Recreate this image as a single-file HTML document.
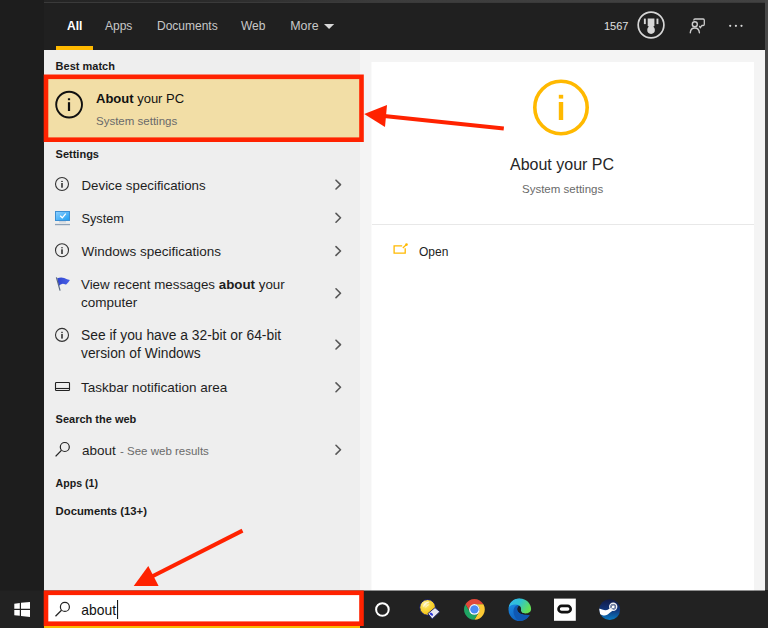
<!DOCTYPE html>
<html><head><meta charset="utf-8">
<style>
*{margin:0;padding:0;box-sizing:border-box}
html,body{width:768px;height:628px;overflow:hidden;background:#1d1d1d}
body{position:relative;font-family:"Liberation Sans",sans-serif}
.a{position:absolute;white-space:nowrap;line-height:1}
.b{position:absolute}
svg{position:absolute;overflow:visible}
#hdr{left:44px;top:0;width:721px;height:50px;background:#202020}
#ttop{left:44px;top:0;width:724px;height:2px;background:linear-gradient(90deg,#242424 0,#2a2a2a 160px,#3c3c3c 340px,#424242 100%)}
#hline{left:44px;top:2px;width:721px;height:1px;background:#3a3a3a}
#left{left:44px;top:50px;width:316px;height:541px;background:#eeeeee}
#right{left:360px;top:50px;width:405px;height:541px;background:#f4f4f4}
#rstrip{left:765px;top:0;width:3px;height:590px;background:#484848}
#card{left:372px;top:62px;width:382px;height:529px;background:#ffffff}
#task{left:0;top:591px;width:768px;height:37px;background:#222222}
.tab{font-size:12px;color:#c8c8c8;top:20px}
.hd{font-size:11px;font-weight:bold;color:#1a1a1a}
.it{font-size:13.5px;color:#1e1e1e}
.sub{font-size:11.5px;color:#6a6a6a}
</style></head><body>
<div class="b" id="hdr"></div>
<div class="b" id="ttop"></div>
<div class="b" id="hline"></div>
<div class="a tab" style="left:67px;color:#fff;font-weight:bold">All</div>
<div class="b" style="left:56px;top:46px;width:37px;height:4px;background:#ffb900"></div>
<div class="a tab" style="left:105px">Apps</div>
<div class="a tab" style="left:157px">Documents</div>
<div class="a tab" style="left:241px">Web</div>
<div class="a tab" style="left:290.3px;font-size:12.4px">More</div>
<svg style="left:0;top:0" width="768" height="50"><path d="M324 24 L334.2 24 L329.1 29 Z" fill="#d8d8d8"/></svg>
<div class="a tab" style="left:604px;font-size:11px;color:#e0e0e0;top:21px">1567</div>
<!-- trophy -->
<svg style="left:0;top:0" width="768" height="50">
 <circle cx="651.05" cy="24.95" r="12.85" fill="none" stroke="#d6d6d6" stroke-width="1.7"/>
 <path d="M647.7 18.6 H654.4 V25.2 L653.1 27.2 H649 L647.7 25.2 Z" fill="#d6d6d6"/>
 <circle cx="651.05" cy="30.1" r="3.8" fill="#d6d6d6"/>
 <rect x="643.9" y="18.6" width="1.9" height="5.5" fill="#d6d6d6"/>
 <rect x="656.5" y="18.6" width="1.9" height="5.5" fill="#d6d6d6"/>
</svg>
<!-- feedback -->
<svg style="left:0;top:0" width="768" height="50">
 <path d="M693.8 20.6 V20.2 Q693.8 19 695 19 H703.1 Q704.3 19 704.3 20.2 V24.3 Q704.3 25.5 703.1 25.5 H701.8 L700.3 27.8 L699.4 25.9" fill="none" stroke="#cccccc" stroke-width="1.3" stroke-linejoin="round"/>
 <circle cx="694.8" cy="24.3" r="2.5" fill="none" stroke="#cccccc" stroke-width="1.4"/>
 <path d="M690.3 32.8 C690.5 29.8 692.3 28 694.8 28 C697.3 28 699.1 29.8 699.4 32.8" fill="none" stroke="#cccccc" stroke-width="1.4" stroke-linecap="round"/>
 <circle cx="730.2" cy="25.8" r="1.1" fill="#d8d8d8"/>
 <circle cx="735.9" cy="25.8" r="1.1" fill="#d8d8d8"/>
 <circle cx="741.5" cy="25.8" r="1.1" fill="#d8d8d8"/>
</svg>

<div class="b" id="left"></div>
<div class="b" id="right"></div>
<div class="b" id="rstrip"></div>
<svg style="left:0;top:0" width="768" height="628"><rect x="371.5" y="62" width="382.5" height="529" fill="#fff"/></svg>
<div class="b" id="task"></div>

<div class="a hd" style="left:55.6px;top:61px">Best match</div>
<svg style="left:0;top:0" width="400" height="200"><rect x="46" y="76.8" width="315.5" height="62.9" fill="#f2dea6" stroke="#ff2200" stroke-width="4.6"/></svg>
<svg style="left:0;top:0" width="400" height="600">
 <circle cx="69.1" cy="104.6" r="12.9" fill="none" stroke="#111" stroke-width="1.9"/>
 <rect x="67.9" y="98.3" width="2.2" height="1.9" fill="#111"/>
 <rect x="67.9" y="102.2" width="2.2" height="8.8" fill="#111"/>
</svg>
<div class="a it" style="left:96px;top:92px;font-size:13px;color:#111"><b>About</b> your PC</div>
<div class="a sub" style="left:96px;top:116px">System settings</div>

<div class="a hd" style="left:55.6px;top:149px">Settings</div>
<!-- icons left list -->
<svg style="left:0;top:0" width="400" height="600">
 <g>
 <circle cx="62" cy="184" r="6.5" fill="none" stroke="#333" stroke-width="1.1"/>
 <rect x="61.2" y="180.9" width="1.6" height="1.1" fill="#333"/>
 <rect x="61.2" y="183" width="1.6" height="4.7" fill="#333"/>
 </g>
 <g transform="translate(0 66.3)">
 <circle cx="62" cy="184" r="6.5" fill="none" stroke="#333" stroke-width="1.1"/>
 <rect x="61.2" y="180.9" width="1.6" height="1.1" fill="#333"/>
 <rect x="61.2" y="183" width="1.6" height="4.7" fill="#333"/>
 </g>
 <g transform="translate(0 150.9)">
 <circle cx="62" cy="184" r="6.5" fill="none" stroke="#333" stroke-width="1.1"/>
 <rect x="61.2" y="180.9" width="1.6" height="1.1" fill="#333"/>
 <rect x="61.2" y="183" width="1.6" height="4.7" fill="#333"/>
 </g>
 <!-- system monitor -->
 <defs><linearGradient id="scr" x1="0" y1="0" x2="1" y2="1"><stop offset="0" stop-color="#8fd0ff"/><stop offset="1" stop-color="#1c9ef2"/></linearGradient></defs>
 <rect x="55.5" y="211.5" width="14" height="9" fill="url(#scr)" stroke="#3b8fd4" stroke-width="1"/>
 <path d="M60.2 215.8 L62.3 217.8 L65.8 213.6" fill="none" stroke="#fff" stroke-width="1.3"/>
 <rect x="59" y="221.2" width="7" height="1.3" fill="#c8d0da"/>
 <rect x="55" y="223.9" width="15" height="1.3" fill="#8ea2b8"/>
 <!-- flag -->
 <defs><linearGradient id="fl" x1="0" y1="0" x2="1" y2="0"><stop offset="0" stop-color="#2f44d0"/><stop offset="1" stop-color="#4a62e6"/></linearGradient></defs>
 <path d="M57.2 278.3 C59.5 277.3 62 277.1 64.2 278 C66 278.8 68 279.6 69.9 280 C69 281.5 67.8 283 66.5 284.2 C65 284.9 63.6 283.6 62.3 283.9 C60.6 284.3 59.6 285.1 58.7 286.1 Z" fill="url(#fl)"/>
 <path d="M56.4 277.3 L60.1 290.6" stroke="#5a6a80" stroke-width="1.2"/>
 <!-- taskbar icon -->
 <rect x="55.5" y="382.5" width="14" height="8" rx="0.8" fill="none" stroke="#222" stroke-width="1.1"/>
 <line x1="55.5" y1="388.5" x2="69.5" y2="388.5" stroke="#222" stroke-width="1.1"/>
 <!-- search -->
 <circle cx="64.8" cy="447" r="4.5" fill="none" stroke="#222" stroke-width="1.2"/>
 <line x1="61.4" y1="450.4" x2="55.6" y2="456.4" stroke="#222" stroke-width="1.3"/>
 <!-- chevrons -->
 <g><path d="M336 180.2 L340.5 184.6 L336 189" fill="none" stroke="#585858" stroke-width="1.6" stroke-linecap="round" stroke-linejoin="round"/></g>
 <g transform="translate(0 33.2)"><path d="M336 180.2 L340.5 184.6 L336 189" fill="none" stroke="#585858" stroke-width="1.6" stroke-linecap="round" stroke-linejoin="round"/></g>
 <g transform="translate(0 66.4)"><path d="M336 180.2 L340.5 184.6 L336 189" fill="none" stroke="#585858" stroke-width="1.6" stroke-linecap="round" stroke-linejoin="round"/></g>
 <g transform="translate(0 108.6)"><path d="M336 180.2 L340.5 184.6 L336 189" fill="none" stroke="#585858" stroke-width="1.6" stroke-linecap="round" stroke-linejoin="round"/></g>
 <g transform="translate(0 160)"><path d="M336 180.2 L340.5 184.6 L336 189" fill="none" stroke="#585858" stroke-width="1.6" stroke-linecap="round" stroke-linejoin="round"/></g>
 <g transform="translate(0 202.7)"><path d="M336 180.2 L340.5 184.6 L336 189" fill="none" stroke="#585858" stroke-width="1.6" stroke-linecap="round" stroke-linejoin="round"/></g>
 <g transform="translate(0 265.1)"><path d="M336 180.2 L340.5 184.6 L336 189" fill="none" stroke="#585858" stroke-width="1.6" stroke-linecap="round" stroke-linejoin="round"/></g>
</svg>
<div class="a it" style="left:81.5px;top:179px;font-size:13.3px">Device specifications</div>
<div class="a it" style="left:81.5px;top:213px;font-size:12.7px">System</div>
<div class="a it" style="left:81.5px;top:245px">Windows specifications</div>
<div class="a it" style="left:81px;top:278px;font-size:13.35px">View recent messages <b>about</b> your</div>
<div class="a it" style="left:81px;top:296px">computer</div>
<div class="a it" style="left:81px;top:329px;font-size:13.85px">See if you have a 32-bit or 64-bit</div>
<div class="a it" style="left:81px;top:347px;font-size:13.8px">version of Windows</div>
<div class="a it" style="left:81px;top:381px">Taskbar notification area</div>
<div class="a hd" style="left:55.6px;top:414px">Search the web</div>
<div class="a it" style="left:82px;top:444px">about</div>
<div class="a sub" style="left:120px;top:446px">- See web results</div>
<div class="a hd" style="left:55.6px;top:478px;font-size:10.6px">Apps (1)</div>
<div class="a hd" style="left:55.6px;top:506px;font-size:11.3px">Documents (13+)</div>

<!-- right pane -->
<svg style="left:0;top:0" width="768" height="300">
 <circle cx="561" cy="107.5" r="26.2" fill="none" stroke="#ffb900" stroke-width="3.6"/>
 <rect x="558.8" y="94.8" width="4.4" height="3.8" fill="#ffb900"/>
 <rect x="558.8" y="102" width="4.4" height="18" fill="#ffb900"/>
 <path d="M402.2 245.9 H394.1 V253.1 H405.2 V248.3" fill="none" stroke="#ffb900" stroke-width="1.3"/>
 <line x1="402.8" y1="248" x2="406" y2="245" stroke="#ffb900" stroke-width="1.2"/>
 <circle cx="406.5" cy="244.6" r="1.3" fill="#ffb900"/>
</svg>
<div class="a" style="left:510px;top:157px;font-size:16px;color:#262626">About your PC</div>
<div class="a sub" style="left:522px;top:184px">System settings</div>
<div class="b" style="left:372px;top:224px;width:382px;height:1px;background:#e8e8e8"></div>
<div class="a" style="left:419px;top:246px;font-size:12px;color:#222">Open</div>

<!-- search box -->
<svg style="left:0;top:0" width="768" height="628"><rect x="0" y="590.5" width="768" height="40" fill="#222222"/><rect x="46" y="592.8" width="315.5" height="30.9" fill="#fff" stroke="#ff2200" stroke-width="4.6"/></svg>
<div class="b" style="left:44px;top:626px;width:316px;height:2px;background:#fbb800"></div>
<svg style="left:0;top:0" width="768" height="628">
 <circle cx="64.9" cy="606.9" r="4.5" fill="none" stroke="#222" stroke-width="1.2"/>
 <line x1="61.5" y1="610.3" x2="55.5" y2="616.3" stroke="#222" stroke-width="1.3"/>
 <rect x="117" y="600" width="1.1" height="19" fill="#1a1a1a"/>
 <!-- windows logo -->
 <path d="M14.3 603.7 L19.8 602.9 V608.7 H14.3 Z M21 602.7 L30 601.9 V608.7 H21 Z M14.3 609.9 H19.8 V615.8 L14.3 615.2 Z M21 609.9 H30 V617.1 L21 616.1 Z" fill="#fff"/>
 <!-- cortana -->
 <circle cx="382.4" cy="609.5" r="6.3" fill="none" stroke="#fff" stroke-width="2"/>
 <!-- disc app -->
 <defs><radialGradient id="dg" cx="0.35" cy="0.3" r="0.8"><stop offset="0" stop-color="#fff6c0"/><stop offset="0.35" stop-color="#fadc4a"/><stop offset="1" stop-color="#f0b800"/></radialGradient></defs>
 <circle cx="427.6" cy="607.4" r="7.9" fill="url(#dg)" stroke="#0e1660" stroke-width="1"/>
 <path d="M423.5 606.5 C424.5 603.8 426.5 602.3 429 602" fill="none" stroke="#fffbe8" stroke-width="1.1" opacity="0.9"/>
 <path d="M425.8 607.4 C426.4 605.8 427.6 605 429.2 604.7" fill="none" stroke="#fffbe8" stroke-width="0.9" opacity="0.8"/>
 <path d="M427.9 613.6 L435 607.6 L439.8 611.7 L432.2 619 Z" fill="#e6e6f0" stroke="#0e1660" stroke-width="0.9" stroke-linejoin="round"/>
 <ellipse cx="431.4" cy="614.2" rx="1.9" ry="1.2" transform="rotate(40 431.4 614.2)" fill="#2a36d8"/>
 <!-- chrome -->
 <path id="chr" d="M465.394 604.2 A10.4 10.4 0 0 1 483.406 604.2 L474.4 604.2 A5.2 5.2 0 0 0 469.897 612 Z" fill="#e0483a"/>
 <path d="M465.394 604.2 A10.4 10.4 0 0 1 483.406 604.2 L474.4 604.2 A5.2 5.2 0 0 0 469.897 612 Z" fill="#fcc934" transform="rotate(120 474.4 609.4)"/>
 <path d="M465.394 604.2 A10.4 10.4 0 0 1 483.406 604.2 L474.4 604.2 A5.2 5.2 0 0 0 469.897 612 Z" fill="#1fa463" transform="rotate(240 474.4 609.4)"/>
 <circle cx="474.4" cy="609.4" r="5.3" fill="#fff"/>
 <circle cx="474.4" cy="609.4" r="4.2" fill="#4a8af4"/>
 <!-- edge -->
 <defs><linearGradient id="eg" x1="0" y1="0" x2="1" y2="0.45"><stop offset="0" stop-color="#38b6f2"/><stop offset="0.5" stop-color="#2ec2d2"/><stop offset="1" stop-color="#62e058"/></linearGradient>
 <linearGradient id="eb" x1="0" y1="0" x2="0.3" y2="1"><stop offset="0" stop-color="#1f96ea"/><stop offset="1" stop-color="#0f62c0"/></linearGradient></defs>
 <path d="M508.5 609.6 A11.3 11.3 0 0 0 519.8 621 C524 621 527.5 618.5 529.6 615 C524 615.5 519.5 614 518 611.5 C516.5 609 517.5 606.5 519.5 605.3 L519.8 598.4 C513.5 598.4 508.5 603.5 508.5 609.6 Z" fill="url(#eb)"/>
 <path d="M517.6 605 C513.2 606.5 512.6 612 514.6 616 C515.6 618.5 517.6 620.5 520 621 C524 621 527.5 618.5 529.6 615 C524 615.5 519.5 614 518 611.5 C516.5 609 517.2 606.5 519.5 605.3 Z" fill="#0f58b2"/>
 <path d="M508.6 607.8 C509.5 601.8 514 598.5 519.8 598.5 C526.5 598.5 531.1 603.8 531.1 609 C531.1 612 528.5 613.4 525.5 613.4 C522.5 613.4 520.5 612.3 521 610 C521.5 608 520.5 605.5 517 604.8 C513.5 604.1 510 605.3 508.6 607.8 Z" fill="url(#eg)"/>
 <path d="M518.6 606.2 C517 608 517.2 610.6 518.6 612 C520.3 613.8 523.5 614.6 527.2 614.8 C523.8 614 521.3 613.1 521 611 C520.8 609 520.5 607 518.6 606.2 Z" fill="#161c28"/>
 <!-- oculus -->
 <rect x="554" y="598.6" width="21.8" height="22.2" fill="#fff"/>
 <rect x="558.5" y="605.9" width="12.2" height="6.2" rx="3.1" fill="none" stroke="#111" stroke-width="2.6"/>
 <!-- steam -->
 <defs><linearGradient id="st" x1="0" y1="0" x2="0" y2="1"><stop offset="0" stop-color="#121a45"/><stop offset="0.5" stop-color="#11347a"/><stop offset="1" stop-color="#0a7cc4"/></linearGradient>
 <clipPath id="stc"><circle cx="609.7" cy="609.7" r="10.4"/></clipPath></defs>
 <circle cx="609.7" cy="609.7" r="10.4" fill="url(#st)"/>
 <g clip-path="url(#stc)" fill="#fff">
  <path d="M598 608.3 L603 609.8 C605 610.5 607 610.3 609 609 L611.5 607.5 L613.2 610.2 L609.5 613 C608 614.4 606.5 615.5 604.6 615.5 C602.6 615.5 600.5 614.6 598 613.2 Z"/>
 </g>
 <circle cx="613.2" cy="606.7" r="3.5" fill="none" stroke="#eeeef4" stroke-width="1.4"/>
 <circle cx="613.2" cy="606.7" r="2.2" fill="none" stroke="#9aa4c0" stroke-width="0.8"/>
 <circle cx="613.2" cy="606.7" r="1.5" fill="#fff"/>
</svg>
<div class="a it" style="left:81.3px;top:604px;font-size:13.9px;color:#111">about</div>

<!-- arrows -->
<svg style="left:0;top:0" width="768" height="628">
 <line x1="503.8" y1="128.5" x2="384" y2="116" stroke="#ff2200" stroke-width="4" stroke-linecap="butt"/>
 <path d="M364.2 114 L387 105 L385 127 Z" fill="#ff2200"/>
 <line x1="242.5" y1="530.6" x2="152" y2="576.5" stroke="#ff2200" stroke-width="4"/>
 <path d="M133.7 586 L148.3 566 L158.6 586 Z" fill="#ff2200"/>
</svg>
</body></html>
